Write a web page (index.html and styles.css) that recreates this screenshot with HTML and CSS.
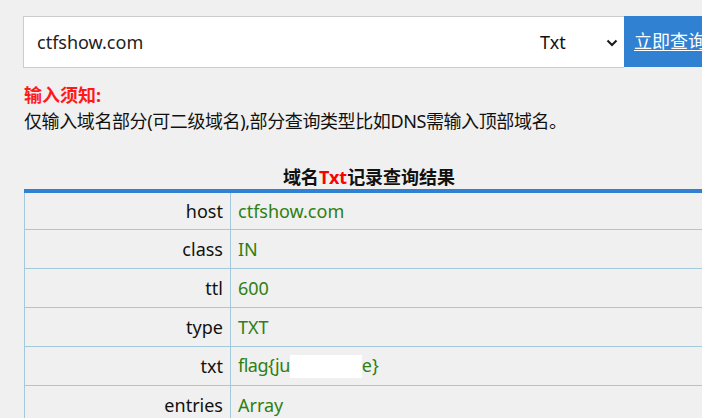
FILE: index.html
```html
<!DOCTYPE html>
<html lang="zh-CN">
<head>
<meta charset="utf-8">
<title>域名Txt记录查询</title>
<link rel="stylesheet" href="styles.css">
</head>
<body>
<div class="page">
  <form class="search">
    <div class="field">
      <div class="domain">ctfshow.com</div>
      <div class="type">
        <span class="type-label">Txt</span>
        <svg class="chev" width="12" height="8" viewBox="0 0 12 8"><path d="M1.5 1.5 L6 6 L10.5 1.5" fill="none" stroke="#1a1a1a" stroke-width="2"/></svg>
      </div>
    </div>
    <div class="btn"><span>立即查询</span></div>
  </form>
  <div class="notice">
    <div class="notice-title">输入须知:</div>
    <div class="notice-text">仅输入域名部分(可二级域名),部分查询类型比如DNS需输入顶部域名。</div>
  </div>
  <div class="result-title">域名<span class="red">Txt</span>记录查询结果</div>
  <table class="result">
    <tr><th>host</th><td>ctfshow.com</td></tr>
    <tr><th>class</th><td>IN</td></tr>
    <tr><th>ttl</th><td>600</td></tr>
    <tr><th>type</th><td>TXT</td></tr>
    <tr><th>txt</th><td><span class="tight">flag{ju</span><span class="redact"></span>e}</td></tr>
    <tr><th>entries</th><td>Array</td></tr>
  </table>
</div>
</body>
</html>
```
FILE: styles.css
```css
html, body {
  margin: 0;
  padding: 0;
  background: #f0f0f0;
  overflow: hidden;
}
body {
  font-family: "Noto Sans", "Noto Sans CJK SC", sans-serif;
  font-size: 18px;
  color: #111;
}
.page {
  width: 691px;
  padding: 16px 0 0 23px;
}
.search {
  display: flex;
  margin: 0;
}
.field {
  flex: 1;
  display: flex;
  height: 52px;
  box-sizing: border-box;
  border: 1px solid #cccccc;
  border-right: none;
  background: #fff;
}
.domain {
  flex: 1;
  padding-left: 13px;
  line-height: 50px;
  color: #222;
}
.type {
  width: 96px;
  display: flex;
  align-items: center;
  padding-left: 12px;
  box-sizing: border-box;
  color: #111;
}
.type-label {
  flex: 1;
}
.chev {
  margin-right: 6px;
  margin-top: 1px;
}
.btn {
  width: 90px;
  height: 51px;
  background: #3181d2;
  color: #fff;
  line-height: 50px;
  padding-left: 10px;
  box-sizing: border-box;
  white-space: nowrap;
  overflow: hidden;
}
.btn span {
  text-decoration: underline;
  text-decoration-thickness: 1px;
  text-underline-offset: 2px;
}
.notice {
  margin-top: 14px;
  padding-left: 1px;
  line-height: 26px;
}
.notice-title {
  color: #ff1a1a;
  font-weight: bold;
}
.notice-text {
  letter-spacing: -0.4px;
}
.result-title {
  margin-top: 31px;
  text-align: center;
  font-weight: bold;
  line-height: 24px;
  padding-left: 1px;
}
.red {
  color: #ff0000;
}
.result {
  margin-left: 1px;
  width: 690px;
  border-collapse: collapse;
  border-top: 4px solid #3181d2;
}
.result th,
.result td {
  border: 1px solid #a3c9dc;
  height: 39px;
  padding: 0 7px;
  box-sizing: border-box;
  font-weight: normal;
  line-height: 24px;
}
.result tr:first-child th,
.result tr:first-child td {
  border-top: none;
}
.result tr:first-child th,
.result tr:first-child td {
  height: 38px;
}
.result th {
  width: 206px;
  text-align: right;
  color: #111;
}
.result td {
  text-align: left;
  color: #2f7f12;
}
.tight {
  letter-spacing: -0.5px;
}
.redact {
  display: inline-block;
  width: 72px;
  height: 23px;
  background: #fff;
  vertical-align: -6px;
}
```
